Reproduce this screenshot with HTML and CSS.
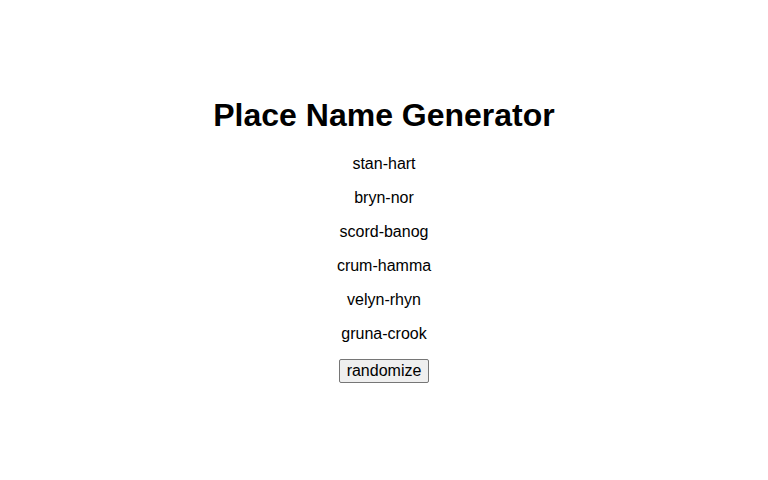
FILE: index.html
```html
<!DOCTYPE html>
<html lang="en">
<head>
<meta charset="utf-8">
<title>Place Name Generator</title>
<link rel="stylesheet" href="styles.css">
</head>
<body>
<div class="app">
  <h1 class="title">Place Name Generator</h1>
  <div class="names">
    <p class="name">stan-hart</p>
    <p class="name">bryn-nor</p>
    <p class="name">scord-banog</p>
    <p class="name">crum-hamma</p>
    <p class="name">velyn-rhyn</p>
    <p class="name">gruna-crook</p>
  </div>
  <button class="randomize" type="button">randomize</button>
</div>
</body>
</html>
```

FILE: styles.css
```css
html, body {
  margin: 0;
  padding: 0;
  background: #fff;
}
body {
  font-family: "Liberation Sans", Arial, sans-serif;
  font-size: 16px;
  color: #000;
  height: 100vh;
  display: flex;
  align-items: center;
  justify-content: center;
}
.app {
  text-align: center;
}
.title {
  font-size: 32px;
  font-weight: bold;
  margin: 0 0 21.44px;
  line-height: 37px;
}
.names {
  margin: 0;
}
.name {
  margin: 16px 0;
  line-height: 18px;
}
.names .name:first-child {
  margin-top: 0;
}
.randomize {
  font-family: inherit;
  font-size: 16px;
  margin: 0;
  padding: 2px 7px;
  line-height: 18px;
  background: #efefef;
  border: 1px solid #767676;
  border-radius: 2px;
  color: #000;
}
```
